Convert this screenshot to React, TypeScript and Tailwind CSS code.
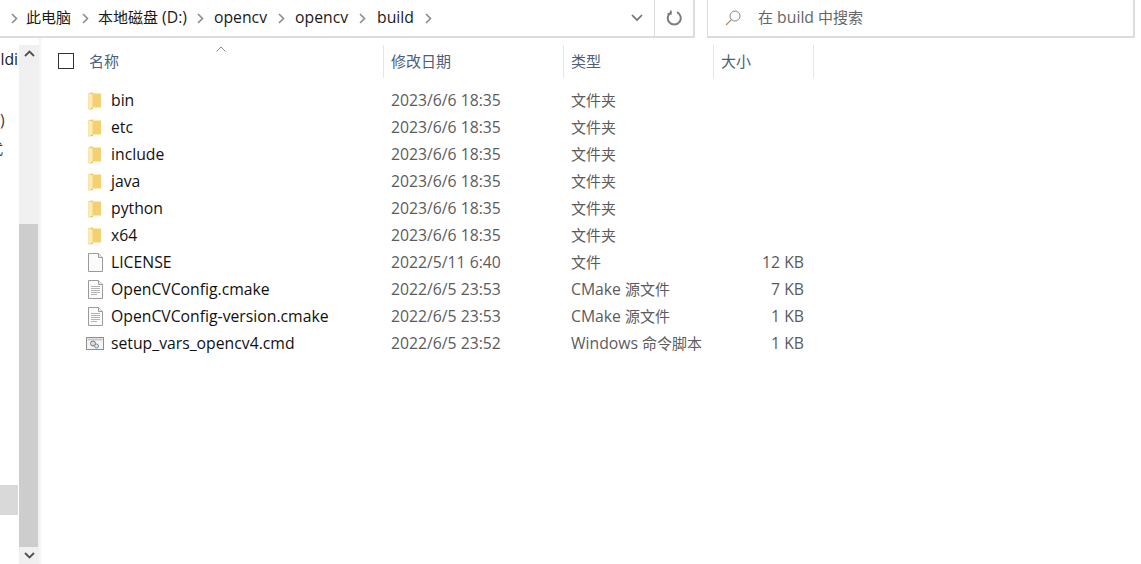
import React from 'react';

const font = '[font-family:"Open_Sans","Noto_Sans_CJK_SC",sans-serif]';

const files = [
  { name: 'bin', date: '2023/6/6 18:35', type: '文件夹', size: '', icon: 'folder' },
  { name: 'etc', date: '2023/6/6 18:35', type: '文件夹', size: '', icon: 'folder' },
  { name: 'include', date: '2023/6/6 18:35', type: '文件夹', size: '', icon: 'folder' },
  { name: 'java', date: '2023/6/6 18:35', type: '文件夹', size: '', icon: 'folder' },
  { name: 'python', date: '2023/6/6 18:35', type: '文件夹', size: '', icon: 'folder' },
  { name: 'x64', date: '2023/6/6 18:35', type: '文件夹', size: '', icon: 'folder' },
  { name: 'LICENSE', date: '2022/5/11 6:40', type: '文件', size: '12 KB', icon: 'blank' },
  { name: 'OpenCVConfig.cmake', date: '2022/6/5 23:53', type: 'CMake 源文件', size: '7 KB', icon: 'text' },
  { name: 'OpenCVConfig-version.cmake', date: '2022/6/5 23:53', type: 'CMake 源文件', size: '1 KB', icon: 'text' },
  { name: 'setup_vars_opencv4.cmd', date: '2022/6/5 23:52', type: 'Windows 命令脚本', size: '1 KB', icon: 'cmd' }
];

// latin text runs a bit wider than the CJK text in the picture, so CJK gets its own size
const Cjk = ({ children }: { children: React.ReactNode }) => <span className="text-[15px]">{children}</span>;

function typeLabel(type: string) {
  const m = type.match(/^([A-Za-z]+ )?(.*)$/);
  return (
    <>
      {m?.[1]}
      <Cjk>{m?.[2]}</Cjk>
    </>
  );
}

const Chevron = () => (
  <svg width="7" height="11" viewBox="0 0 7 11" className="shrink-0">
    <path d="M1 1l4.500 4.500L1 10" fill="none" stroke="#8c8c8c" strokeWidth="1.600" />
  </svg>
);

const FileIcon = ({ kind }: { kind: string }) => {
  if (kind === 'folder') {
    return (
      <svg width="14" height="18" viewBox="0 0 14 18" className="ml-[1px]">
        <path d="M0.500 1L5 0.500V17L0.500 17.500Z" fill="#e8c05c" />
        <path d="M2 1.500H13V15.500H2Z" fill="#f5d071" />
        <path d="M0.500 1L4.500 2.500V15.500L0.500 17.500Z" fill="#fcecb4" />
      </svg>
    );
  }
  if (kind === 'cmd') {
    return (
      <svg width="18" height="14" viewBox="0 0 18 14" className="ml-[-1px]">
        <rect x="0.500" y="0.500" width="17" height="12" fill="#f4f4f4" stroke="#8f8f8f" />
        <rect x="1.500" y="1.500" width="15" height="2" fill="#c9c9c9" />
        <circle cx="7" cy="6.500" r="2.500" fill="#ddd" stroke="#777" />
        <circle cx="10.500" cy="9" r="2" fill="#dfe8f0" stroke="#6b8fb0" />
      </svg>
    );
  }
  return (
    <svg width="15" height="19" viewBox="0 0 15 19" className="ml-[1px]">
      <path d="M0.500 0.500H10.500L14.500 4.500V18.500H0.500Z" fill="#fbfbfb" stroke="#9b9b9b" />
      <path d="M10.500 0.500V4.500H14.500" fill="#eee" stroke="#9b9b9b" />
      {kind === 'text' && (
        <path d="M3 6.500H12M3 8.500H12M3 10.500H12M3 12.500H12M3 14.500H9" stroke="#b4b4b4" />
      )}
    </svg>
  );
};

export default function App() {
  return (
    <div className={`flex h-screen w-[1141px] flex-col overflow-hidden bg-white text-[15.75px] text-[#1a1a1a] ${font}`}>
      {/* address bar + search */}
      <div className="flex h-[38px] shrink-0">
        <div className="flex w-[695px] items-center border-r-2 border-b-2 border-[#dcdcdc]">
          <div className="flex flex-1 items-center pl-[11px] leading-none">
            <Chevron />
            <span className="ml-[8px]"><Cjk>此电脑</Cjk></span>
            <span className="ml-[11px]"><Chevron /></span>
            <span className="ml-[9px]"><Cjk>本地磁盘</Cjk> (D:)</span>
            <span className="ml-[10px]"><Chevron /></span>
            <span className="ml-[10px]">opencv</span>
            <span className="ml-[11px]"><Chevron /></span>
            <span className="ml-[10px]">opencv</span>
            <span className="ml-[11px]"><Chevron /></span>
            <span className="ml-[11px]">build</span>
            <span className="ml-[11px]"><Chevron /></span>
          </div>
          <div className="flex w-[24px] justify-center pl-[1px]">
            <svg width="12" height="8" viewBox="0 0 12 8">
              <path d="M1 1l5 5 5-5" fill="none" stroke="#707070" strokeWidth="1.700" />
            </svg>
          </div>
          <div className="ml-[6px] flex h-full w-[39px] items-center justify-center border-l border-[#dcdcdc]">
            <svg width="16" height="16" viewBox="0 0 16 16">
              <path d="M5.500 2.200A6.500 6.500 0 1 0 11 2.200" fill="none" stroke="#7d7d7d" strokeWidth="2" />
              <path d="M4.800 0.500V3.800H1.500" fill="none" stroke="#7d7d7d" strokeWidth="1.700" />
            </svg>
          </div>
        </div>
        <div className="ml-[12px] flex w-[428px] items-center gap-[17px] border-x-2 border-b-2 border-l-[1px] border-[#dcdcdc] pl-[17px] text-[#666]">
          <svg width="16" height="16" viewBox="0 0 16 16">
            <circle cx="10" cy="6" r="5" fill="none" stroke="#8a8a8a" />
            <path d="M6.500 9.500L1 15" stroke="#b08d6e" strokeWidth="1.200" />
          </svg>
          <span><Cjk>在</Cjk> build <Cjk>中搜索</Cjk></span>
        </div>
      </div>

      <div className="flex min-h-0 flex-1">
        {/* cut-off navigation pane */}
        <div className="w-[19px] shrink-0 overflow-hidden leading-none">
          <div className="flex h-[447px] flex-col items-end pr-[1px] pt-[14px]">
            <span className="h-[61px] whitespace-nowrap">ldi</span>
            <span className="h-[29px] w-full text-[#3a3a3a]">)</span>
            {/* only the right edge of this character is visible */}
            <span className="w-full -translate-x-[11px] text-[14px] whitespace-nowrap text-[#3a3a3a]">式</span>
          </div>
          <div className="h-[30px] w-[18px] bg-[#d9d9d9]" />
        </div>

        {/* nav scrollbar */}
        <div className="mt-[7px] flex w-[20px] shrink-0 flex-col bg-[#f0f0f0]">
          <div className="flex h-[17px] items-center justify-center">
            <svg width="11" height="7" viewBox="0 0 11 7">
              <path d="M1 6l4.500-4.500L10 6" fill="none" stroke="#505050" strokeWidth="1.800" />
            </svg>
          </div>
          <div className="h-[162px]" />
          <div className="w-[19px] flex-1 bg-[#cdcdcd]" />
          <div className="flex h-[17px] items-center justify-center">
            <svg width="11" height="7" viewBox="0 0 11 7">
              <path d="M1 1l4.500 4.500L10 1" fill="none" stroke="#505050" strokeWidth="1.800" />
            </svg>
          </div>
        </div>
        <div className="w-[2px] shrink-0 bg-[#f5f5f5]" />

        {/* file list */}
        <div className="relative min-w-0 flex-1 pt-[7px] pl-[9px]">
          <div className="flex h-[33px] text-[15px] text-[#4c607a]">
            <div className="flex w-[333px] items-center">
              <div className="mt-[-1px] ml-[8px] h-[16px] w-[16px] border border-[#333]" />
              <span className="ml-[15px]">名称</span>
            </div>
            <div className="flex w-[180px] items-center border-l border-[#e5e5e5] pl-[7px]">修改日期</div>
            <div className="flex w-[150px] items-center border-l border-[#e5e5e5] pl-[7px]">类型</div>
            <div className="flex w-[101px] items-center border-x border-[#e5e5e5] pl-[7px]">大小</div>
          </div>
          <svg width="10" height="6" viewBox="0 0 10 6" className="absolute top-[8px] left-[175px]">
            <path d="M0.500 5.500L5 1l4.500 4.500" fill="none" stroke="#8a8a8a" />
          </svg>

          <div className="pt-[9px]">
            {files.map((f) => (
              <div key={f.name} className="flex h-[27px] items-center leading-none">
                <div className="flex w-[333px] items-center">
                  <div className="ml-[37px] flex w-[24px] shrink-0 justify-start">
                    <FileIcon kind={f.icon} />
                  </div>
                  <span className="whitespace-nowrap text-[#111]">{f.name}</span>
                </div>
                <div className="w-[180px] pl-[8px] text-[#5c5c5c]">{f.date}</div>
                <div className="w-[150px] pl-[8px] whitespace-nowrap text-[#5c5c5c]">{typeLabel(f.type)}</div>
                <div className="w-[91px] text-right text-[#5c5c5c]">{f.size}</div>
              </div>
            ))}
          </div>
        </div>
      </div>
    </div>
  );
}
